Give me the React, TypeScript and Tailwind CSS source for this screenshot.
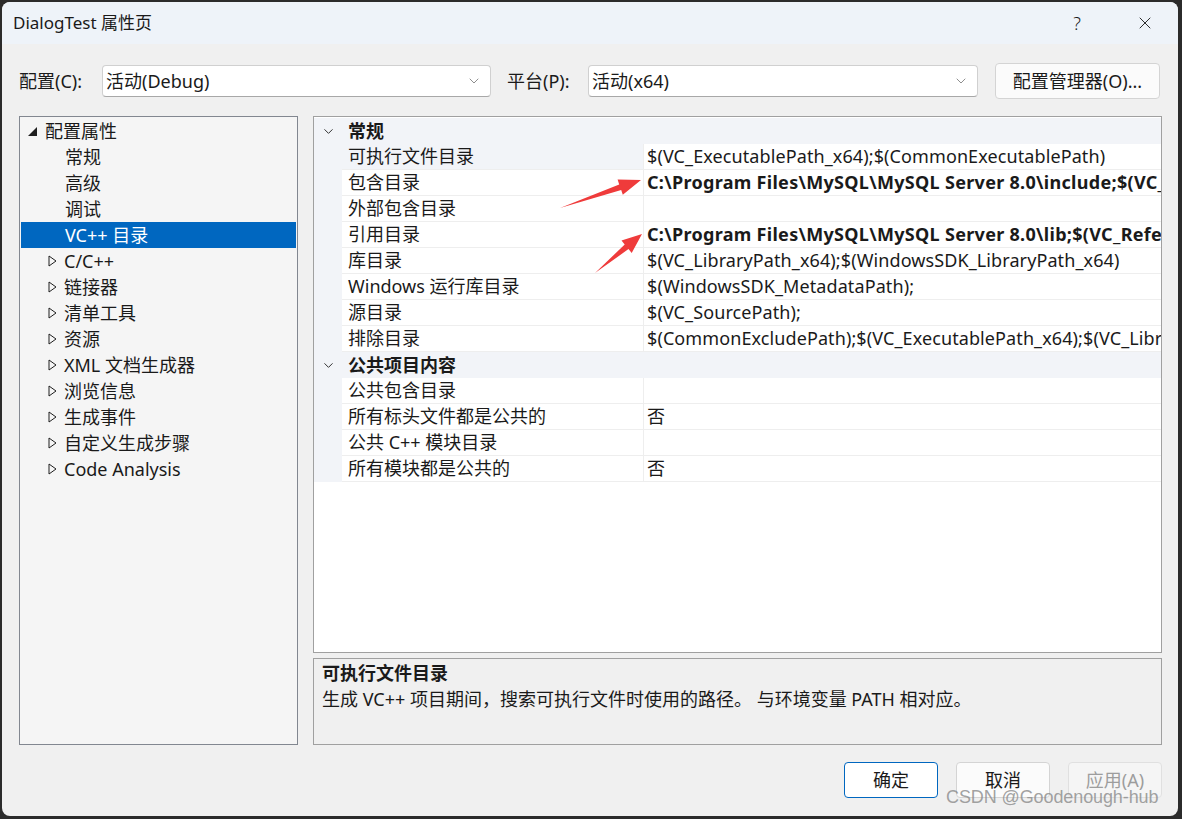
import { ChevronDown, X } from 'lucide-react';

const FONT = "font-['Noto_Sans','Noto_Sans_CJK_SC',sans-serif]";

type TreeItem = { label: string; kind: 'root' | 'leaf' | 'closed'; selected?: boolean };

const treeItems: TreeItem[] = [
  { label: '配置属性', kind: 'root' },
  { label: '常规', kind: 'leaf' },
  { label: '高级', kind: 'leaf' },
  { label: '调试', kind: 'leaf' },
  { label: 'VC++ 目录', kind: 'leaf', selected: true },
  { label: 'C/C++', kind: 'closed' },
  { label: '链接器', kind: 'closed' },
  { label: '清单工具', kind: 'closed' },
  { label: '资源', kind: 'closed' },
  { label: 'XML 文档生成器', kind: 'closed' },
  { label: '浏览信息', kind: 'closed' },
  { label: '生成事件', kind: 'closed' },
  { label: '自定义生成步骤', kind: 'closed' },
  { label: 'Code Analysis', kind: 'closed' },
];

type Prop = { name: string; value: string; bold?: boolean; selected?: boolean };
type Section = { title: string; props: Prop[] };

const sections: Section[] = [
  {
    title: '常规',
    props: [
      { name: '可执行文件目录', value: '$(VC_ExecutablePath_x64);$(CommonExecutablePath)', selected: true },
      {
        name: '包含目录',
        value: 'C:\\Program Files\\MySQL\\MySQL Server 8.0\\include;$(VC_IncludePath);$(WindowsSDK_IncludePath);',
        bold: true,
      },
      { name: '外部包含目录', value: '' },
      {
        name: '引用目录',
        value: 'C:\\Program Files\\MySQL\\MySQL Server 8.0\\lib;$(VC_ReferencesPath_x64);',
        bold: true,
      },
      { name: '库目录', value: '$(VC_LibraryPath_x64);$(WindowsSDK_LibraryPath_x64)' },
      { name: 'Windows 运行库目录', value: '$(WindowsSDK_MetadataPath);' },
      { name: '源目录', value: '$(VC_SourcePath);' },
      { name: '排除目录', value: '$(CommonExcludePath);$(VC_ExecutablePath_x64);$(VC_LibraryPath_x64)' },
    ],
  },
  {
    title: '公共项目内容',
    props: [
      { name: '公共包含目录', value: '' },
      { name: '所有标头文件都是公共的', value: '否' },
      { name: '公共 C++ 模块目录', value: '' },
      { name: '所有模块都是公共的', value: '否' },
    ],
  },
];

const OpenTriangle = () => (
  <svg width="9" height="12" viewBox="0 0 9 12" className="shrink-0">
    <polygon points="1,1 8,6 1,11" fill="none" stroke="#1f1f1f" strokeWidth="1" />
  </svg>
);

const FilledTriangle = () => (
  <svg width="9" height="9" viewBox="0 0 9 9" className="shrink-0">
    <polygon points="9,0 9,9 0,9" fill="#1f1f1f" />
  </svg>
);

const Combo = ({ value, width }: { value: string; width: string }) => (
  <div
    className={`${width} shrink-0 h-[32px] bg-white border border-[#d0d0d0] border-b-[#a8a8a8] rounded-[4px] flex items-center justify-between pl-[3px] pr-[8px]`}
  >
    <span className="text-[18px] text-[#1a1a1a]">{value}</span>
    <ChevronDown size={16} strokeWidth={1} className="text-[#555]" />
  </div>
);

const App = () => {
  return (
    <div className={`relative w-full h-[819px] bg-[#2b2b2b] p-[2px] pr-[4px] pb-[3px] ${FONT}`}>
      <div className="w-full h-full rounded-[8px] overflow-hidden bg-[#f0f0f0] flex flex-col">
        {/* title bar */}
        <div className="h-[42px] bg-[#eef3f9] flex items-center justify-between pl-[11px] shrink-0">
          <span className="text-[17px] text-[#1a1a1a]">DialogTest 属性页</span>
          <div className="flex items-center h-full">
            <span className="w-[70px] text-center text-[18px] text-[#1a1a1a] font-light">?</span>
            <div className="w-[66px] flex justify-center">
              <X size={20} strokeWidth={1.1} className="text-[#1a1a1a]" />
            </div>
          </div>
        </div>

        {/* body */}
        <div className="flex-1 flex flex-col px-[17px] pr-[16px] text-[18px] text-[#1a1a1a]">
          <div className="flex items-center mt-[19px] h-[36px]">
            <span className="w-[83px] shrink-0">配置(C):</span>
            <Combo value="活动(Debug)" width="w-[389px]" />
            <span className="ml-[16px] w-[81px] shrink-0">平台(P):</span>
            <Combo value="活动(x64)" width="w-[390px]" />
            <button className="ml-[17px] w-[165px] shrink-0 h-[36px] bg-[#fbfbfb] border border-[#d4d4d4] rounded-[4px]">
              配置管理器(O)...
            </button>
          </div>

          <div className="flex mt-[17px] h-[629px] gap-[15px]">
            {/* tree */}
            <div className="w-[279px] shrink-0 h-full border border-[#828790] bg-[#f5f5f5] p-[1px]">
              {treeItems.map((item) => (
                <div
                  key={item.label}
                  className={`h-[26px] flex items-center whitespace-nowrap ${item.selected ? 'bg-[#0067c0] text-white' : ''}`}
                >
                  {item.kind === 'root' && (
                    <div className="flex items-center pl-[7px] gap-[8px]">
                      <FilledTriangle />
                      <span>{item.label}</span>
                    </div>
                  )}
                  {item.kind === 'leaf' && <span className="pl-[44px]">{item.label}</span>}
                  {item.kind === 'closed' && (
                    <div className="flex items-center pl-[27px] gap-[7px]">
                      <OpenTriangle />
                      <span>{item.label}</span>
                    </div>
                  )}
                </div>
              ))}
            </div>

            {/* property grid + description */}
            <div className="flex-1 min-w-0 flex flex-col gap-[5px]">
              <div className="h-[537px] border border-[#a0a0a0] bg-white pt-[1px] overflow-hidden">
                {sections.map((sec) => (
                  <div key={sec.title}>
                    <div className="h-[26px] flex items-center bg-[#f2f4f8]">
                      <div className="w-[28px] flex justify-center shrink-0">
                        <ChevronDown size={15} strokeWidth={1.6} className="text-[#333]" />
                      </div>
                      <span className="pl-[6px] font-bold">{sec.title}</span>
                    </div>
                    {sec.props.map((p) => (
                      <div key={p.name} className="h-[26px] flex">
                        <div className="w-[28px] bg-[#f2f4f8] shrink-0" />
                        <div
                          className={`w-[301px] shrink-0 flex items-center pl-[6px] border-b border-[#eeeeee] whitespace-nowrap overflow-hidden ${p.selected ? 'bg-[#f2f4f8]' : 'bg-white'}`}
                        >
                          {p.name}
                        </div>
                        <div
                          className={`flex-1 min-w-0 flex items-center pl-[3px] border-l border-b border-[#eeeeee] whitespace-nowrap overflow-hidden ${p.bold ? 'font-bold tracking-[0.3px]' : 'tracking-[0.1px]'}`}
                        >
                          {p.value}
                        </div>
                      </div>
                    ))}
                  </div>
                ))}
              </div>
              <div className="h-[87px] border border-[#a0a0a0] bg-[#f0f0f0] px-[8px] pt-[1px]">
                <div className="font-bold leading-[26px]">可执行文件目录</div>
                <div className="leading-[26px]">生成 VC++ 项目期间，搜索可执行文件时使用的路径。 与环境变量 PATH 相对应。</div>
              </div>
            </div>
          </div>

          <div className="flex justify-end gap-[18px] mt-[17px]">
            <button className="w-[94px] h-[36px] bg-white border border-[#0067c0] rounded-[4px]">确定</button>
            <button className="w-[94px] h-[36px] bg-[#fbfbfb] border border-[#d4d4d4] rounded-[4px]">取消</button>
            <button className="w-[94px] h-[36px] bg-[#f5f5f5] border border-[#e0e0e0] rounded-[4px] text-[#9d9d9d]">
              应用(A)
            </button>
          </div>
        </div>
      </div>

      {/* annotation arrows */}
      <svg className="absolute inset-0 pointer-events-none" width="1182" height="819">
        <polygon points="560,208 621.2,190 622.8,194.8 641,180 617.6,179.6 619.2,184.4" fill="#ef3b3b" />
        <polygon points="595,273 628.5,249.1 631.7,253 642,234 621.5,240.6 624.7,244.5" fill="#ef3b3b" />
      </svg>

      {/* watermark */}
      <div className="absolute left-[946px] top-[784px] text-[18px] tracking-[-0.1px] text-[#8a8a8a]/80 pointer-events-none font-['Liberation_Sans',sans-serif] whitespace-nowrap">
        CSDN @Goodenough-hub
      </div>
    </div>
  );
};

export default App;
